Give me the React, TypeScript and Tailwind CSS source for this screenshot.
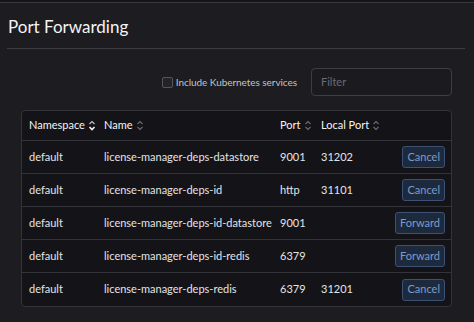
const rows = [
  { ns: "default", name: "license-manager-deps-datastore", port: "9001", local: "31202", action: "Cancel" },
  { ns: "default", name: "license-manager-deps-id", port: "http", local: "31101", action: "Cancel" },
  { ns: "default", name: "license-manager-deps-id-datastore", port: "9001", local: "", action: "Forward" },
  { ns: "default", name: "license-manager-deps-id-redis", port: "6379", local: "", action: "Forward" },
  { ns: "default", name: "license-manager-deps-redis", port: "6379", local: "31201", action: "Cancel" },
];

function SortIcon({ active }: { active?: boolean }) {
  return (
    <svg width="8" height="11" viewBox="0 0 8 11" className="ml-[3px] inline-block align-[-2px]">
      <path d="M1.5 4 L4 1.5 L6.5 4" fill="none" stroke={active ? "#c4c4ca" : "#6b6b73"} strokeWidth="1.1" />
      <path d="M1.5 7 L4 9.5 L6.5 7" fill="none" stroke={active ? "#f4f4f5" : "#6b6b73"} strokeWidth={active ? "1.6" : "1.1"} />
    </svg>
  );
}

export default function App() {
  return (
    <div className="w-[474px] h-[322px] overflow-hidden bg-[#1c1c21] font-['Lato','Liberation_Sans',sans-serif] text-[#e4e4e7]">
      <div className="h-[3px] bg-[#141417] border-b border-[#3a3a40]" />
      <div className="px-[7px]">
        <h1 className="pt-[13px] pb-[10px] pl-[1px] text-[17px] leading-[22px] text-[#f4f4f5]">Port Forwarding</h1>
        <div className="mr-[2px] h-px bg-[#3b3b42]" />
        <div className="mt-[19px] flex items-center justify-end gap-[14px] pr-[15px]">
          <label className="flex items-center gap-[3px] text-[10px] tracking-[-0.05px] text-[#c2c2c8]">
            <span className="h-[11px] w-[11px] rounded-[2px] border border-[#55555c] bg-[#232328]" />
            Include Kubernetes services
          </label>
          <div className="flex h-[28px] w-[141px] items-center rounded-[4px] border border-[#3d3d44] bg-[#1a1a1f] px-[9px] text-[11px] text-[#6b6b73]">
            Filter
          </div>
        </div>
        <div className="ml-[14px] mr-[15px] mt-[14px] rounded-[4px] border border-[#33333a] bg-[#141418] text-[11px]">
          <div className="flex h-[30px] items-center border-b border-[#33333a] text-[#f4f4f5]">
            <div className="w-[82px] pl-[7px]">
              Namespace<SortIcon active />
            </div>
            <div className="w-[176px]">
              Name<SortIcon />
            </div>
            <div className="w-[41px]">
              Port<SortIcon />
            </div>
            <div className="flex-1">
              Local Port<SortIcon />
            </div>
          </div>
          {rows.map((r, i) => (
            <div
              key={r.name}
              className={`flex h-[33px] items-center text-[#e4e4e7] ${i < rows.length - 1 ? "border-b border-[#33333a]" : ""}`}
            >
              <div className="w-[82px] pl-[7px]">{r.ns}</div>
              <div className="w-[176px]">{r.name}</div>
              <div className="w-[41px]">{r.port}</div>
              <div className="flex-1">{r.local}</div>
              <button className="mr-[6px] h-[22px] rounded-[3px] border border-[#3b5274] bg-[#1d2a3e] px-[4px] text-[11px] text-[#7d9bc7]">
                {r.action}
              </button>
            </div>
          ))}
        </div>
      </div>
    </div>
  );
}
